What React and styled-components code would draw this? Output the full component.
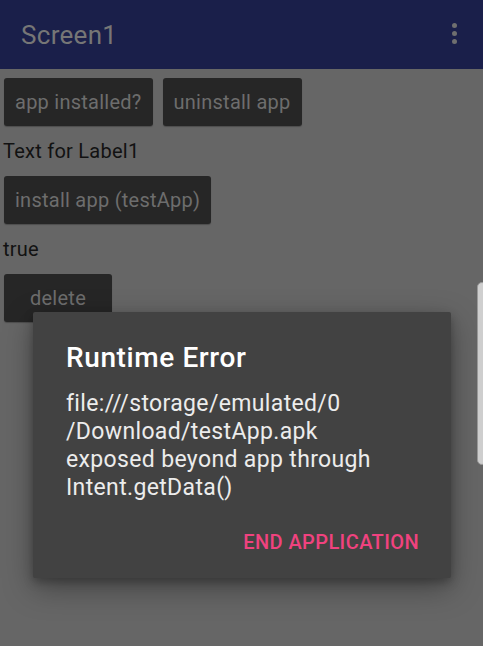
import styled, { createGlobalStyle } from 'styled-components';

const GlobalStyle = createGlobalStyle`
  body {
    margin: 0;
    font-family: Roboto, "Liberation Sans", sans-serif;
  }
`;

const Screen = styled.div`
  position: relative;
  width: 483px;
  height: 646px;
  overflow: hidden;
  background: #666666;
`;

const AppBar = styled.div`
  height: 69px;
  display: flex;
  align-items: center;
  justify-content: space-between;
  padding: 0 26px 0 21px;
  box-sizing: border-box;
  background: #1a1f4a;
`;

const AppTitle = styled.div`
  font-size: 26px;
  color: #767676;
  letter-spacing: 0.3px;
`;

const Dots = styled.div`
  display: flex;
  flex-direction: column;
  gap: 3px;
  padding-bottom: 3px;
  span {
    width: 5px;
    height: 5px;
    border-radius: 50%;
    background: #6f6f6f;
  }
`;

const Content = styled.div`
  padding: 9px 4px 0;
`;

const Row = styled.div`
  display: flex;
  gap: 10px;
`;

const Button = styled.div`
  height: 48px;
  display: inline-flex;
  align-items: center;
  justify-content: center;
  min-width: ${(p) => p.$min || 0}px;
  padding: 0 11px;
  box-sizing: border-box;
  background: #262626;
  border-radius: 3px;
  box-shadow: 0 1px 1px rgba(0, 0, 0, 0.25);
  font-size: 20px;
  letter-spacing: 0.25px;
  color: #6d6d6d;
`;

const Label = styled.div`
  font-size: 20px;
  letter-spacing: 0.25px;
  line-height: 24px;
  color: #121212;
  padding: 13px 0 13px;
  margin-left: -1px;
`;

const Dialog = styled.div`
  position: absolute;
  left: 33px;
  top: 312px;
  width: 418px;
  height: 266px;
  box-sizing: border-box;
  padding: 28px 33px 0;
  background: #424242;
  border-radius: 2px;
  box-shadow: 0 10px 30px rgba(0, 0, 0, 0.35), 0 4px 10px rgba(0, 0, 0, 0.25);
  display: flex;
  flex-direction: column;
`;

const DialogTitle = styled.div`
  font-size: 28px;
  font-weight: 500;
  letter-spacing: 0.6px;
  line-height: 36px;
  color: #ffffff;
`;

const DialogBody = styled.div`
  margin-top: 14px;
  font-size: 23px;
  letter-spacing: 0.35px;
  line-height: 28px;
  color: #ececec;
`;

const Actions = styled.div`
  margin-top: auto;
  margin-bottom: 24px;
  display: flex;
  justify-content: flex-end;
  margin-right: -1px;
`;

const ActionButton = styled.div`
  font-size: 20px;
  font-weight: 500;
  color: #f0427f;
  letter-spacing: 0.4px;
`;

const EdgeHandle = styled.div`
  position: absolute;
  right: -4px;
  top: 282px;
  width: 8px;
  height: 181px;
  background: #cfcfcf;
  border: 1px solid #9a9a9a;
  border-radius: 6px;
`;

export default function App() {
  return (
    <Screen>
      <GlobalStyle />
      <AppBar>
        <AppTitle>Screen1</AppTitle>
        <Dots>
          <span />
          <span />
          <span />
        </Dots>
      </AppBar>
      <Content>
        <Row>
          <Button>app installed?</Button>
          <Button>uninstall app</Button>
        </Row>
        <Label>Text for Label1</Label>
        <Row>
          <Button>install app (testApp)</Button>
        </Row>
        <Label>true</Label>
        <Row>
          <Button $min={108}>delete</Button>
        </Row>
      </Content>
      <EdgeHandle />
      <Dialog>
        <DialogTitle>Runtime Error</DialogTitle>
        <DialogBody>
          file:///storage/emulated/0
          <br />
          /Download/testApp.apk
          <br />
          exposed beyond app through
          <br />
          Intent.getData()
        </DialogBody>
        <Actions>
          <ActionButton>END APPLICATION</ActionButton>
        </Actions>
      </Dialog>
    </Screen>
  );
}
